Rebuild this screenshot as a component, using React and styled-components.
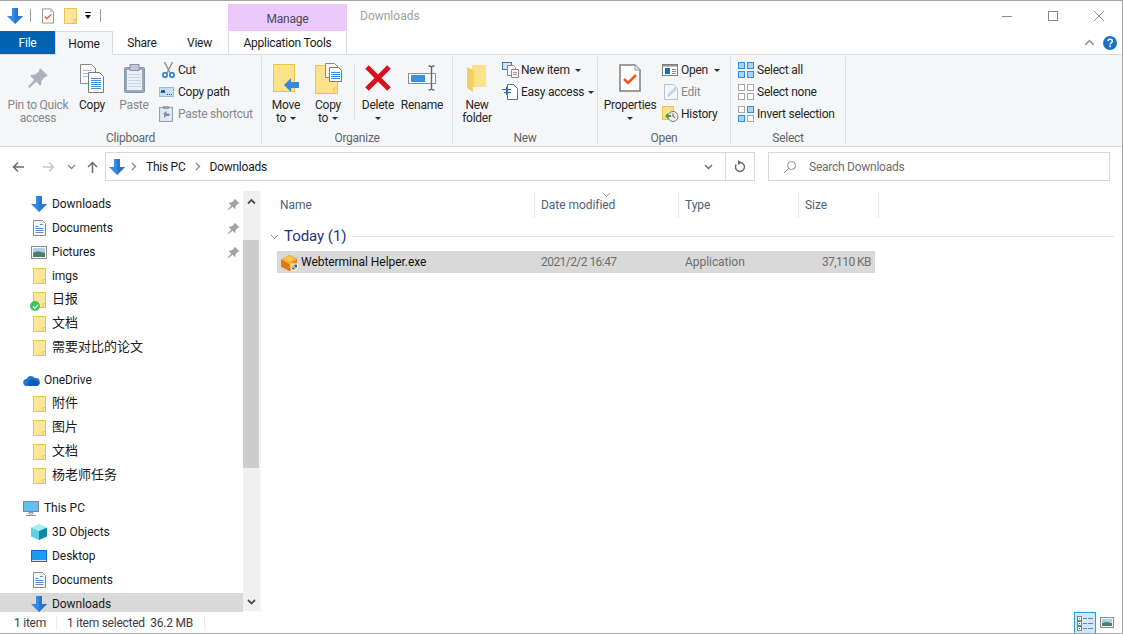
import React from 'react';
import styled, { createGlobalStyle } from 'styled-components';

const GlobalStyle = createGlobalStyle`
  html, body {
    margin: 0;
    padding: 0;
    background: #ffffff;
  }
  body {
    font-family: Roboto, "Noto Sans CJK SC", sans-serif;
    font-size: 12px;
    letter-spacing: -0.25px;
    color: #1a1a1a;
  }
  * {
    box-sizing: border-box;
  }
`;

const Window = styled.div`
  width: 1123px;
  height: 634px;
  display: flex;
  flex-direction: column;
  overflow: hidden;
  border-top: 1px solid #a6a6a6;
  border-right: 1px solid #a6a6a6;
  border-bottom: 1px solid #a6a6a6;
`;

const TitleBar = styled.div`
  height: 30px;
  display: flex;
`;

const QuickBar = styled.div`
  width: 228px;
  display: flex;
  align-items: center;
  padding: 0 0 0 7px;
  margin-top: -1px;
`;

const QuickSep = styled.div`
  width: 1px;
  height: 13px;
  background: #9a9a9a;
  margin: ${(p) => p.$margin};
`;

const QuickIcon = styled.div`
  display: flex;
  margin-right: ${(p) => p.$mr || 0}px;
`;

const ContextTab = styled.div`
  width: 119px;
  height: 27px;
  margin-top: 3px;
  background: #ebc9fb;
  color: #4a4a5a;
  display: flex;
  align-items: center;
  justify-content: center;
  padding-top: 2px;
`;

const WindowTitle = styled.div`
  margin: 8px 0 0 13px;
  color: #a0a0a0;
  letter-spacing: 0;
`;

const WindowButtons = styled.div`
  margin-left: auto;
  display: flex;
`;

const WindowButton = styled.div`
  width: 46px;
  height: 29px;
  display: flex;
  align-items: center;
  justify-content: center;
`;

const TabRow = styled.div`
  height: 24px;
  display: flex;
  border-bottom: 1px solid #dadbdc;
`;

const FileTab = styled.div`
  width: 55px;
  height: 23px;
  background: #0063b1;
  color: #ffffff;
  display: flex;
  align-items: center;
  justify-content: center;
`;

const Tab = styled.div`
  width: ${(p) => p.$w}px;
  height: ${(p) => (p.$active ? 24 : 23)}px;
  display: flex;
  align-items: center;
  justify-content: center;
  background: ${(p) => (p.$active ? '#f5f6f7' : 'transparent')};
  border: 1px solid ${(p) => (p.$active ? '#dadbdc' : 'transparent')};
  border-bottom: none;
`;

const ContextBody = styled(Tab)`
  border-left: 1px solid #dadbdc;
  border-right: 1px solid #dadbdc;
`;

const RibbonHelp = styled.div`
  margin-left: auto;
  display: flex;
  align-items: center;
  gap: 8px;
  padding-right: 5px;
`;

const Ribbon = styled.div`
  height: 92px;
  display: flex;
  background: #f5f6f7;
  border-bottom: 1px solid #dadbdc;
  padding: 2px 0;
`;

const Group = styled.div`
  width: ${(p) => p.$w}px;
  display: flex;
  flex-direction: column;
  border-right: 1px solid #dfe0e1;
`;

const GroupBody = styled.div`
  flex: 1;
  min-height: 0;
  display: flex;
`;

const GroupLabel = styled.div`
  height: 16px;
  text-align: center;
  color: #5c6670;
  padding-top: 3px;
`;

const BigButton = styled.div`
  width: ${(p) => p.$w}px;
  margin-left: ${(p) => p.$ml || 0}px;
  display: flex;
  flex-direction: column;
  align-items: center;
  color: ${(p) => (p.$off ? '#85888c' : '#262626')};
`;

const BigIcon = styled.div`
  height: 42px;
  flex-shrink: 0;
  display: flex;
  align-items: center;
  justify-content: center;
`;

const BigLabel = styled.div`
  line-height: 13px;
  text-align: center;
  white-space: nowrap;
`;

const Caret = styled.span`
  display: inline-block;
  width: 0;
  height: 0;
  margin-left: ${(p) => p.$ml ?? 4}px;
  vertical-align: 2px;
  border-left: 3px solid transparent;
  border-right: 3px solid transparent;
  border-top: 3px solid #333333;
`;

const VSep = styled.div`
  width: 1px;
  height: 55px;
  margin: 7px 0 0 ${(p) => p.$ml}px;
  background: #dfe0e1;
`;

const SmallColumn = styled.div`
  margin-left: ${(p) => p.$ml}px;
  padding-top: 2px;
  display: flex;
  flex-direction: column;
`;

const SmallButton = styled.div`
  height: 22px;
  display: flex;
  align-items: center;
  white-space: nowrap;
  color: ${(p) => (p.$off ? '#85888c' : '#262626')};
`;

const SmallIcon = styled.div`
  width: 19px;
  padding-left: ${(p) => p.$pl || 0}px;
  display: flex;
  align-items: center;
  flex-shrink: 0;
`;

const AddressRow = styled.div`
  height: 44px;
  display: flex;
  align-items: center;
  padding-bottom: 5px;
`;

const NavButtons = styled.div`
  width: 105px;
  display: flex;
  align-items: center;
  padding-left: 12px;
`;

const NavGap = styled.span`
  width: ${(p) => p.$w}px;
  flex-shrink: 0;
`;

const AddressBox = styled.div`
  width: 650px;
  height: 29px;
  display: flex;
  align-items: center;
  border: 1px solid #d9d9d9;
  padding-left: 3px;
`;

const Crumb = styled.span`
  margin: 0 ${(p) => p.$mr}px 0 8px;
  color: #1a1a1a;
`;

const AddressEnd = styled.div`
  margin-left: auto;
  display: flex;
  align-items: center;
  height: 100%;
`;

const AddressDrop = styled.div`
  width: 36px;
  height: 100%;
  display: flex;
  align-items: center;
  justify-content: center;
  padding-left: 7px;
  padding-right: 6px;
  border-right: 1px solid #d9d9d9;
`;

const AddressRefresh = styled.div`
  flex: 0 0 28px;
  display: flex;
  align-items: center;
  justify-content: center;
`;

const SearchBox = styled.div`
  width: 342px;
  height: 29px;
  margin-left: 13px;
  display: flex;
  align-items: center;
  gap: 12px;
  padding-left: 14px;
  border: 1px solid #d9d9d9;
  color: #6d6d6d;
`;

const Main = styled.div`
  flex: 1;
  min-height: 0;
  display: flex;
`;

const NavPane = styled.div`
  width: 243px;
  overflow: hidden;
  flex-shrink: 0;
  padding-top: 1px;
  letter-spacing: -0.05px;
`;

const NavRow = styled.div`
  height: 24px;
  display: flex;
  align-items: center;
  padding-left: ${(p) => (p.$top ? 23 : 31)}px;
  margin-top: ${(p) => (p.$gap ? 8 : 0)}px;
  background: linear-gradient(${(p) => (p.$selected ? '#ffffff 1px, #d9d9d9 1px' : 'transparent, transparent')});
`;

const NavIcon = styled.div`
  width: 21px;
  flex-shrink: 0;
  position: relative;
  display: flex;
  align-items: center;
  padding-left: ${(p) => (p.$narrow ? 2 : 0)}px;
`;

const SyncBadge = styled.div`
  position: absolute;
  left: -1px;
  bottom: -3px;
  width: 10px;
  height: 10px;
  border-radius: 50%;
  background: #3fc25a;
  display: flex;
  align-items: center;
  justify-content: center;
`;

const NavText = styled.span`
  font-size: ${(p) => (p.$cjk ? 13 : 12)}px;
  margin-bottom: ${(p) => (p.$cjk ? 6 : 0)}px;
  letter-spacing: ${(p) => (p.$cjk ? 0 : 'inherit')};
  white-space: nowrap;
`;

const PinSlot = styled.div`
  margin-left: auto;
  padding-right: 3px;
  display: flex;
`;

const ScrollBar = styled.div`
  width: 16px;
  flex-shrink: 0;
  background: #f0f0f0;
  display: flex;
  flex-direction: column;
  margin-bottom: 1px;
`;

const ScrollButton = styled.div`
  height: 20px;
  display: flex;
  align-items: center;
  justify-content: center;
`;

const ScrollThumb = styled.div`
  height: 228px;
  margin-top: 29px;
  background: #cdcdcd;
`;

const ScrollRest = styled.div`
  flex: 1;
`;

const FilePane = styled.div`
  flex: 1;
  border-left: 2px solid #f4f4f4;
  padding-left: 12px;
  min-width: 0;
  letter-spacing: -0.05px;
`;

const Header = styled.div`
  display: flex;
  height: 27px;
`;

const HeaderCell = styled.div`
  width: ${(p) => p.$w}px;
  padding-left: ${(p) => p.$pl || 6}px;
  display: flex;
  align-items: center;
  position: relative;
  color: #4c607a;
  border-right: 1px solid #e5e5e5;
  margin-top: 1px;
`;

const SortMark = styled.div`
  position: absolute;
  left: 67px;
  top: -2px;
  display: flex;
`;

const GroupHead = styled.div`
  height: 30px;
  display: flex;
  align-items: center;
  padding-top: 6px;
  margin-left: -3px;
  margin-right: 8px;
  color: #1e3287;
  font-size: 15px;
  gap: 5px;
`;

const GroupLine = styled.div`
  flex: 1;
  height: 1px;
  background: #e2e2e2;
  margin-left: 1px;
`;

const FileRow = styled.div`
  width: 598px;
  height: 22px;
  margin: 3px 0 0 4px;
  background: #d9d9d9;
  display: flex;
  align-items: center;
  color: #6d6d6d;
`;

const FileIcon = styled.div`
  width: 24px;
  padding-left: 4px;
  display: flex;
  flex-shrink: 0;
`;

const FileCell = styled.div`
  width: ${(p) => p.$w}px;
  text-align: ${(p) => (p.$right ? 'right' : 'left')};
  color: ${(p) => (p.$name ? '#101010' : '#6d6d6d')};
  letter-spacing: ${(p) => (p.$tight ? '-0.55px' : 'inherit')};
  flex-shrink: 0;
`;

const StatusBar = styled.div`
  height: 21px;
  display: flex;
  align-items: center;
  color: #3a3a4a;
`;

const StatusCell = styled.div`
  width: ${(p) => p.$w}px;
  padding-left: ${(p) => p.$pl}px;
  display: flex;
  height: 14px;
  align-items: center;
  border-right: 1px solid #ececec;
  white-space: nowrap;
`;

const ViewButtons = styled.div`
  margin-left: auto;
  display: flex;
  align-items: center;
  gap: 4px;
  padding-right: 8px;
`;

const ViewButton = styled.div`
  width: 22px;
  height: 22px;
  display: flex;
  align-items: center;
  justify-content: center;
  background: ${(p) => (p.$active ? '#cce8ff' : 'transparent')};
  border: 1px solid ${(p) => (p.$active ? '#26a0da' : 'transparent')};
`;

const DownArrow = () => (
  <svg width="16" height="16" viewBox="0 0 16 16">
    <path d="M5 0h6v8h5l-8 8-8-8h5z" fill="#3689e0" />
    <path d="M8 0h3v8h5l-8 8z" fill="#2a76cc" />
  </svg>
);

const Folder = () => (
  <svg width="13" height="16" viewBox="0 0 13 16">
    <rect x=".5" y=".5" width="12" height="15" fill="#fde59a" stroke="#e8c552" />
    <path d="M10 15.5v-4h2.5" fill="none" stroke="#e8c552" />
  </svg>
);

const DocCheck = ({ w = 12, h = 16 }) => (
  <svg width={w} height={h} viewBox="0 0 22 28">
    <path d="M1 1h15l5 5v21H1z" fill="#ffffff" stroke="#7f7f7f" strokeWidth="1.5" />
    <path d="M16 1v5h5" fill="#e5e5e5" stroke="#9a9a9a" />
    <path d="M5 15l4 4 8-8" fill="none" stroke="#f0591e" strokeWidth="2.5" />
  </svg>
);

const Pin = ({ size = 13, color = '#9aa2ab' }) => (
  <svg width={size} height={size} viewBox="0 0 20 20">
    <path d="M12 1l7 7-2 1-1 0-3 4 0 3-1 1-3.5-3.5L2 19l-1-1 5.5-6.5L3 8l1-1 3 0 4-3 0-1z" fill={color} />
  </svg>
);

const CopyIcon = () => (
  <svg width="25" height="29" viewBox="0 0 25 29">
    <path d="M.5.5h11l4 4v15H.5z" fill="#ffffff" stroke="#8a8a8a" />
    <path d="M3 6.5h9M3 9.5h9M3 12.5h5" stroke="#9ec4ea" />
    <path d="M8.5 8.5h11l4 4v16h-15z" fill="#ffffff" stroke="#7a7a7a" />
    <path d="M11 14.5h10M11 16.5h10M11 18.5h10M11 20.5h10M11 22.5h10M11 24.5h10" stroke="#3f8fe0" />
  </svg>
);

const PasteIcon = () => (
  <svg width="21" height="29" viewBox="0 0 21 29">
    <rect x=".5" y="3.5" width="20" height="25" rx="1" fill="#9aa8bc" stroke="#8595ab" />
    <rect x="3" y="6" width="15" height="20" fill="#eceff6" />
    <path d="M4 10.5h13M4 13.5h13M4 16.5h13M4 19.5h13M4 22.5h13" stroke="#cdd4e2" />
    <rect x="6" y=".5" width="9" height="6" fill="#c0c8d4" stroke="#8595ab" />
  </svg>
);

const CutIcon = () => (
  <svg width="13" height="16" viewBox="0 0 13 16">
    <path d="M2.5 0l5.500 11M10.500 0L5 11" stroke="#8d8d8d" strokeWidth="1.3" fill="none" />
    <circle cx="3" cy="13" r="2.2" fill="none" stroke="#1f78c8" strokeWidth="1.5" />
    <circle cx="10" cy="13" r="2.2" fill="none" stroke="#1f78c8" strokeWidth="1.5" />
  </svg>
);

const CopyPathIcon = () => (
  <svg width="15" height="10" viewBox="0 0 15 10">
    <rect x=".5" y=".5" width="14" height="9" fill="#bfe0f7" stroke="#9bbdd6" />
    <path d="M2 6l1-3 1 3 1-3 1 3" fill="none" stroke="#2a4a70" />
    <path d="M8 7.5h1M10 7.5h1M12 7.5h1" stroke="#2a4a70" />
  </svg>
);

const PasteShortcutIcon = () => (
  <svg width="14" height="16" viewBox="0 0 14 16">
    <rect x=".5" y="1.5" width="13" height="14" fill="#e4e9f1" stroke="#94a2b6" strokeWidth="1.2" />
    <rect x="4" y="0" width="6" height="3" fill="#94a2b6" />
    <path d="M5 12V8H3.5l4-3v2.5h3V10h-3" fill="#7d90a8" />
  </svg>
);

const MoveToIcon = () => (
  <svg width="27" height="29" viewBox="0 0 27 29">
    <rect x=".5" y=".5" width="21" height="27" fill="#fde28a" stroke="#e9c548" />
    <path d="M18 28v-5h3.5" fill="none" stroke="#e9c548" />
    <path d="M11 21l7-7v4h8v6h-8v4z" fill="#3689e0" />
  </svg>
);

const CopyToIcon = () => (
  <svg width="27" height="31" viewBox="0 0 27 31">
    <rect x=".5" y="2.5" width="22" height="28" fill="#fde28a" stroke="#e9c548" />
    <path d="M19 30v-5h3.5" fill="none" stroke="#e9c548" />
    <path d="M10.5.5h9l3 3v11h-12z" fill="#f7f7f7" stroke="#8a8a8a" />
    <path d="M14.5 4.5h9l3 3v11h-12z" fill="#ffffff" stroke="#7a7a7a" />
    <path d="M16 9.5h9M16 11.5h9M16 13.5h9M16 15.5h9" stroke="#3f8fe0" />
  </svg>
);

const DeleteIcon = () => (
  <svg width="26" height="26" viewBox="0 0 26 26">
    <path d="M2 2l22 22M24 2L2 24" stroke="#d9101c" strokeWidth="5" />
  </svg>
);

const RenameIcon = () => (
  <svg width="29" height="26" viewBox="0 0 29 26">
    <rect x=".5" y="8.5" width="27" height="10" fill="#ffffff" stroke="#8a9098" />
    <rect x="3" y="10" width="14" height="7" fill="#3792e4" />
    <path d="M20.5 1c2 0 2.5 0 3 1v22c-.5 1-1 1-3 1M26.5 1c-2 0-2.5 0-3 1M26.5 25c-2 0-2.5 0-3-1" fill="none" stroke="#5f6670" strokeWidth="1.4" />
  </svg>
);

const NewFolderIcon = () => (
  <svg width="20" height="28" viewBox="0 0 20 28">
    <path d="M5 1h14v22H5z" fill="#fde28a" />
    <path d="M0 3l6 3v22l-6-4z" fill="#f4cf66" />
    <path d="M6 6h2v17H6z" fill="#fbd976" />
  </svg>
);

const NewItemIcon = () => (
  <svg width="17" height="16" viewBox="0 0 17 16">
    <rect x=".5" y=".5" width="9" height="7" fill="#cfe4f6" stroke="#3f78a8" />
    <path d="M5.5 3.5h6l2 2v8h-8z" fill="#ffffff" stroke="#8a8a8a" />
    <path d="M9.5 7.5h7v8h-7z" fill="#fff4f4" stroke="#8a8a8a" />
    <path d="M11 10.5h4M11 12.5h4" stroke="#d88a8a" />
  </svg>
);

const EasyAccessIcon = () => (
  <svg width="16" height="16" viewBox="0 0 16 16">
    <path d="M5.5.5h6l4 4v11h-10z" fill="#ffffff" stroke="#6e6e6e" />
    <path d="M0 5.5h9M2 8.5h7M4.5 3v8" stroke="#2a6ca8" fill="none" />
  </svg>
);

const OpenIcon = () => (
  <svg width="16" height="12" viewBox="0 0 16 12">
    <rect x=".5" y=".5" width="15" height="11" fill="#ffffff" stroke="#7f7f7f" />
    <path d="M1 1h14v1.5H1z" fill="#8f8f8f" />
    <rect x="3" y="4" width="5" height="6" fill="#1868c4" />
    <path d="M10 5.5h4M10 7.5h4M10 9.5h4" stroke="#8a8a8a" />
  </svg>
);

const EditIcon = () => (
  <svg width="14" height="16" viewBox="0 0 14 16">
    <path d="M.5.5h9l4 4v11H.5z" fill="#f3f6fb" stroke="#b9c5d6" />
    <path d="M3 13l1-3 7-7 2 2-7 7z" fill="#c5d5ea" />
  </svg>
);

const HistoryIcon = () => (
  <svg width="17" height="16" viewBox="0 0 17 16">
    <rect x=".5" y=".5" width="11" height="13" fill="#fde28a" stroke="#e9c548" />
    <circle cx="11" cy="10.5" r="5" fill="#f2f2f2" stroke="#777777" />
    <path d="M11 7.5v3l2 1" fill="none" stroke="#555555" />
    <path d="M3 10l3-3v2h3v2H6v2z" fill="#36a838" />
  </svg>
);

const SelectIcon = ({ on }) => (
  <svg width="16" height="16" viewBox="0 0 16 16">
    {[[0, 0], [9, 0], [0, 9], [9, 9]].map(([x, y], i) => (
      <rect
        key={i}
        x={x + 0.5}
        y={y + 0.5}
        width="6"
        height="6"
        fill={on[i] ? '#a9d3f5' : '#ffffff'}
        stroke={on[i] ? '#2f8fe0' : '#a8a8a8'}
      />
    ))}
  </svg>
);

const Chevron = ({ dir = 'down', size = 9, color = '#707070', width = 1.4 }) => {
  const points = {
    down: '1,3 4.5,6.5 8,3',
    up: '1,6.5 4.5,3 8,6.5',
    right: '3,1 6.5,4.5 3,8',
  };
  return (
    <svg width={size} height={size} viewBox="0 0 9 9">
      <polyline points={points[dir]} fill="none" stroke={color} strokeWidth={width} />
    </svg>
  );
};

const NavArrow = ({ dir, color }) => (
  <svg width="13" height="12" viewBox="0 0 13 12">
    {dir === 'left' && <path d="M12 6H2M6 1.5L1.5 6 6 10.5" fill="none" stroke={color} strokeWidth="1.5" />}
    {dir === 'right' && <path d="M1 6h10M7 1.5L11.5 6 7 10.5" fill="none" stroke={color} strokeWidth="1.5" />}
    {dir === 'up' && <path d="M6.5 12V2M2 6l4.5-4.5L11 6" fill="none" stroke={color} strokeWidth="1.5" />}
  </svg>
);

const RefreshIcon = () => (
  <svg width="12" height="14" viewBox="0 0 12 14">
    <path d="M6 2.5a4.5 4.5 0 1 1-3.8 2" fill="none" stroke="#6a6a6a" strokeWidth="1.4" />
    <path d="M4 0l3.5 2.5L4 5z" fill="#6a6a6a" />
  </svg>
);

const SearchIcon = () => (
  <svg width="14" height="14" viewBox="0 0 14 14">
    <circle cx="8.5" cy="5.5" r="4" fill="none" stroke="#8a8a8a" />
    <path d="M5.5 8.5L1 13" stroke="#8a8a8a" />
  </svg>
);

const DocumentsIcon = () => (
  <svg width="13" height="16" viewBox="0 0 13 16">
    <path d="M.5.5h9l3 3v12H.5z" fill="#f6f6f6" stroke="#8a8a8a" />
    <path d="M2.5 6.5h3M2.5 8.5h8M2.5 10.5h8M2.5 12.5h8M7 4.5h3" stroke="#5b8fc4" />
  </svg>
);

const PicturesIcon = () => (
  <svg width="16" height="13" viewBox="0 0 16 13">
    <rect x=".5" y=".5" width="15" height="12" fill="#ffffff" stroke="#8d8d8d" />
    <rect x="2" y="2" width="12" height="5" fill="#a9d4e8" />
    <path d="M2 7c3-2 6-2 12 0v4H2z" fill="#4f7d68" />
  </svg>
);

const OneDriveIcon = () => (
  <svg width="17" height="11" viewBox="0 0 17 11">
    <path d="M4 11a3.5 3.5 0 0 1-.5-7A5 5 0 0 1 12 3a3.8 3.8 0 0 1 1.500 8z" fill="#1f78d0" />
    <path d="M6 11a3 3 0 0 1 1-5.500A4 4 0 0 1 13 5.500 2.800 2.800 0 0 1 14 11z" fill="#0f5cb0" />
  </svg>
);

const ThisPCIcon = () => (
  <svg width="16" height="15" viewBox="0 0 16 15">
    <rect x=".5" y=".5" width="15" height="10" fill="#63bdf6" stroke="#7c8a96" />
    <path d="M6 11.5h4v1.5H6zM3 14.5h10" stroke="#8f9aa4" fill="none" />
  </svg>
);

const CubeIcon = () => (
  <svg width="16" height="16" viewBox="0 0 16 16">
    <path d="M8 0l8 3.5L8 7 0 3.5z" fill="#a8ecf0" />
    <path d="M0 3.5L8 7v9l-8-3.5z" fill="#5fd0df" />
    <path d="M16 3.5L8 7v9l8-3.5z" fill="#1187a8" />
  </svg>
);

const DesktopIcon = () => (
  <svg width="16" height="12" viewBox="0 0 16 12">
    <rect width="16" height="12" fill="#0a6fd0" />
    <path d="M1 1h14v9H1z" fill="#1a9cf0" />
    <path d="M1 10h14v1H1z" fill="#cfe4f6" />
  </svg>
);

const ExeIcon = () => (
  <svg width="17" height="17" viewBox="0 0 17 17">
    <path d="M0 5.5L8.5 1 16 5v7.5L8.5 17 0 12.5z" fill="#e8861a" />
    <path d="M0 5.5L8.5 10v7L0 12.5z" fill="#dc7a18" />
    <path d="M0 5.5L8.5 1 16 5l-7.500 5z" fill="#f9b233" />
    <ellipse cx="8" cy="4.8" rx="4" ry="2.4" fill="#fcc64c" />
    <path d="M9.5 9.5H17v4c0 1.8-1.7 3-3.700 3.500-2-.5-3.800-1.700-3.800-3.500z" fill="#ffffff" />
    <path d="M13.3 10.5H16v3h-2.700zM10.500 13.500h2.800v2.400c-1.500-.4-2.800-1.100-2.800-2.400z" fill="#1c64c0" />
    <path d="M10.5 10.5h2.800v3h-2.800zM13.300 13.500H16c0 1.100-1.200 2-2.700 2.400z" fill="#f2c230" />
  </svg>
);

const DetailsIcon = () => (
  <svg width="16" height="16" viewBox="0 0 16 16">
    <g stroke="#7f7f7f" fill="#ffffff">
      <rect x=".5" y="1.5" width="4" height="4" />
      <rect x=".5" y="6.5" width="4" height="4" />
      <rect x=".5" y="11.5" width="4" height="4" />
    </g>
    <rect x="2" y="3" width="1" height="1" fill="#8a8a8a" />
    <rect x="2" y="8" width="1" height="1" fill="#2a78c8" />
    <rect x="2" y="13" width="1" height="1" fill="#c83030" />
    <path d="M6 3.5h4M11 3.5h5M6 8.5h4M11 8.5h5M6 13.5h4M11 13.5h5" stroke="#7f7f7f" />
  </svg>
);

const LargeThumbIcon = () => (
  <svg width="14" height="11" viewBox="0 0 14 11">
    <rect x=".5" y=".5" width="13" height="10" fill="#ffffff" stroke="#8d8d8d" strokeWidth="1.2" />
    <rect x="2" y="2" width="10" height="3.5" fill="#a9d4e8" />
    <path d="M2 6c3-1.5 6-1 10 0v3H2z" fill="#4f7d68" />
  </svg>
);

const pinned = [
  { label: 'Downloads', icon: <DownArrow />, pin: true },
  { label: 'Documents', icon: <DocumentsIcon />, pin: true, narrow: true },
  { label: 'Pictures', icon: <PicturesIcon />, pin: true },
  { label: 'imgs', icon: <Folder />, narrow: true },
  { label: '日报', icon: <Folder />, narrow: true, cjk: true, synced: true },
  { label: '文档', icon: <Folder />, narrow: true, cjk: true },
  { label: '需要对比的论文', icon: <Folder />, narrow: true, cjk: true },
];

const oneDrive = ['附件', '图片', '文档', '杨老师任务'];

const computer = [
  { label: '3D Objects', icon: <CubeIcon /> },
  { label: 'Desktop', icon: <DesktopIcon /> },
  { label: 'Documents', icon: <DocumentsIcon />, narrow: true },
  { label: 'Downloads', icon: <DownArrow />, selected: true },
];

const NavItem = ({ item }) => (
  <NavRow $selected={item.selected}>
    <NavIcon $narrow={item.narrow}>
      {item.icon}
      {item.synced && (
        <SyncBadge>
          <svg width="7" height="7" viewBox="0 0 7 7">
            <path d="M1 3.5l1.8 1.8L6 2" fill="none" stroke="#ffffff" strokeWidth="1.2" />
          </svg>
        </SyncBadge>
      )}
    </NavIcon>
    <NavText $cjk={item.cjk}>{item.label}</NavText>
    {item.pin && (
      <PinSlot>
        <Pin />
      </PinSlot>
    )}
  </NavRow>
);

const App = () => {
  return (
    <Window>
      <GlobalStyle />
      <TitleBar>
        <QuickBar>
          <DownArrow />
          <QuickSep $margin="0 11px 0 7px" />
          <QuickIcon $mr={10}><DocCheck /></QuickIcon>
          <QuickIcon $mr={8}><Folder /></QuickIcon>
          <svg width="6" height="7" viewBox="0 0 6 7">
            <path d="M0 0h6v1H0zM0 3h6L3 7z" fill="#111111" />
          </svg>
          <QuickSep $margin="0 0 0 9px" />
        </QuickBar>
        <ContextTab>Manage</ContextTab>
        <WindowTitle>Downloads</WindowTitle>
        <WindowButtons>
          <WindowButton>
            <svg width="10" height="10" viewBox="0 0 10 10"><path d="M0 5.5h10" stroke="#8a8a8a" /></svg>
          </WindowButton>
          <WindowButton>
            <svg width="10" height="10" viewBox="0 0 10 10"><rect x=".5" y=".5" width="9" height="9" fill="none" stroke="#8a8a8a" /></svg>
          </WindowButton>
          <WindowButton>
            <svg width="10" height="10" viewBox="0 0 10 10"><path d="M0 0l10 10M10 0L0 10" stroke="#8a8a8a" /></svg>
          </WindowButton>
        </WindowButtons>
      </TitleBar>

      <TabRow>
        <FileTab>File</FileTab>
        <Tab $w={58} $active>Home</Tab>
        <Tab $w={58}>Share</Tab>
        <Tab $w={57}>View</Tab>
        <ContextBody $w={119}>Application Tools</ContextBody>
        <RibbonHelp>
          <Chevron dir="up" size={11} color="#9a9a9a" />
          <svg width="14" height="14" viewBox="0 0 14 14">
            <circle cx="7" cy="7" r="7" fill="#1a72c8" />
            <path d="M4.8 5.2C5 3.8 6 3.2 7.2 3.2c1.3 0 2.2.8 2.2 1.9 0 1.8-2.3 1.7-2.3 3.5" fill="none" stroke="#ffffff" strokeWidth="1.5" />
            <rect x="6.3" y="9.5" width="1.6" height="1.6" fill="#ffffff" />
          </svg>
        </RibbonHelp>
      </TabRow>

      <Ribbon>
        <Group $w={262}>
          <GroupBody>
            <BigButton $w={76} $off>
              <BigIcon><Pin size={22} color="#aab2bd" /></BigIcon>
              <BigLabel>Pin to Quick<br />access</BigLabel>
            </BigButton>
            <BigButton $w={32}>
              <BigIcon><CopyIcon /></BigIcon>
              <BigLabel>Copy</BigLabel>
            </BigButton>
            <BigButton $w={48} $ml={2} $off>
              <BigIcon><PasteIcon /></BigIcon>
              <BigLabel>Paste</BigLabel>
            </BigButton>
            <SmallColumn $ml={1}>
              <SmallButton>
                <SmallIcon $pl={3}><CutIcon /></SmallIcon>Cut
              </SmallButton>
              <SmallButton>
                <SmallIcon><CopyPathIcon /></SmallIcon>Copy path
              </SmallButton>
              <SmallButton $off>
                <SmallIcon><PasteShortcutIcon /></SmallIcon>Paste shortcut
              </SmallButton>
            </SmallColumn>
          </GroupBody>
          <GroupLabel>Clipboard</GroupLabel>
        </Group>

        <Group $w={191}>
          <GroupBody>
            <BigButton $w={44} $ml={2}>
              <BigIcon><MoveToIcon /></BigIcon>
              <BigLabel>Move<br />to <Caret $ml={1} /></BigLabel>
            </BigButton>
            <BigButton $w={40}>
              <BigIcon><CopyToIcon /></BigIcon>
              <BigLabel>Copy<br />to <Caret $ml={1} /></BigLabel>
            </BigButton>
            <VSep $ml={6} />
            <BigButton $w={44} $ml={1}>
              <BigIcon><DeleteIcon /></BigIcon>
              <BigLabel>Delete<br /><Caret $ml={0} /></BigLabel>
            </BigButton>
            <BigButton $w={44}>
              <BigIcon><RenameIcon /></BigIcon>
              <BigLabel>Rename</BigLabel>
            </BigButton>
          </GroupBody>
          <GroupLabel>Organize</GroupLabel>
        </Group>

        <Group $w={145}>
          <GroupBody>
            <BigButton $w={48}>
              <BigIcon><NewFolderIcon /></BigIcon>
              <BigLabel>New<br />folder</BigLabel>
            </BigButton>
            <SmallColumn $ml={1}>
              <SmallButton>
                <SmallIcon><NewItemIcon /></SmallIcon>New item<Caret $ml={5} />
              </SmallButton>
              <SmallButton>
                <SmallIcon><EasyAccessIcon /></SmallIcon>Easy access<Caret $ml={4} />
              </SmallButton>
            </SmallColumn>
          </GroupBody>
          <GroupLabel>New</GroupLabel>
        </Group>

        <Group $w={133}>
          <GroupBody>
            <BigButton $w={64}>
              <BigIcon><DocCheck w={22} h={28} /></BigIcon>
              <BigLabel>Properties<br /><Caret $ml={0} /></BigLabel>
            </BigButton>
            <SmallColumn $ml={0}>
              <SmallButton>
                <SmallIcon><OpenIcon /></SmallIcon>Open<Caret $ml={6} />
              </SmallButton>
              <SmallButton $off>
                <SmallIcon $pl={2}><EditIcon /></SmallIcon>Edit
              </SmallButton>
              <SmallButton>
                <SmallIcon><HistoryIcon /></SmallIcon>History
              </SmallButton>
            </SmallColumn>
          </GroupBody>
          <GroupLabel>Open</GroupLabel>
        </Group>

        <Group $w={115}>
          <GroupBody>
            <SmallColumn $ml={7}>
              <SmallButton>
                <SmallIcon><SelectIcon on={[1, 1, 1, 1]} /></SmallIcon>Select all
              </SmallButton>
              <SmallButton>
                <SmallIcon><SelectIcon on={[0, 0, 0, 0]} /></SmallIcon>Select none
              </SmallButton>
              <SmallButton>
                <SmallIcon><SelectIcon on={[0, 1, 1, 0]} /></SmallIcon>Invert selection
              </SmallButton>
            </SmallColumn>
          </GroupBody>
          <GroupLabel>Select</GroupLabel>
        </Group>
      </Ribbon>

      <AddressRow>
        <NavButtons>
          <NavArrow dir="left" color="#6a6a6a" />
          <NavGap $w={17} />
          <NavArrow dir="right" color="#c8c8c8" />
          <NavGap $w={12} />
          <Chevron size={9} color="#8a8a8a" />
          <NavGap $w={10} />
          <NavArrow dir="up" color="#6a6a6a" />
        </NavButtons>
        <AddressBox>
          <DownArrow />
          <NavGap $w={4} />
          <Chevron dir="right" color="#8a8a8a" />
          <Crumb $mr={7}>This PC</Crumb>
          <Chevron dir="right" color="#8a8a8a" />
          <Crumb $mr={0}>Downloads</Crumb>
          <AddressEnd>
            <AddressDrop><Chevron color="#6a6a6a" /></AddressDrop>
            <AddressRefresh><RefreshIcon /></AddressRefresh>
          </AddressEnd>
        </AddressBox>
        <SearchBox>
          <SearchIcon />
          Search Downloads
        </SearchBox>
      </AddressRow>

      <Main>
        <NavPane>
          {pinned.map((item, i) => (
            <NavItem key={i} item={item} />
          ))}
          <NavRow $top $gap>
            <NavIcon><OneDriveIcon /></NavIcon>
            <NavText>OneDrive</NavText>
          </NavRow>
          {oneDrive.map((label) => (
            <NavItem key={label} item={{ label, icon: <Folder />, narrow: true, cjk: true }} />
          ))}
          <NavRow $top $gap>
            <NavIcon><ThisPCIcon /></NavIcon>
            <NavText>This PC</NavText>
          </NavRow>
          {computer.map((item, i) => (
            <NavItem key={i} item={item} />
          ))}
        </NavPane>

        <ScrollBar>
          <ScrollButton><Chevron dir="up" color="#505050" width={1.8} /></ScrollButton>
          <ScrollThumb />
          <ScrollRest />
          <ScrollButton><Chevron color="#505050" width={1.8} /></ScrollButton>
        </ScrollBar>

        <FilePane>
          <Header>
            <HeaderCell $w={262} $pl={7}>Name</HeaderCell>
            <HeaderCell $w={144}>
              <SortMark><Chevron size={9} color="#a0a0a0" width={1} /></SortMark>
              Date modified
            </HeaderCell>
            <HeaderCell $w={120}>Type</HeaderCell>
            <HeaderCell $w={80}>Size</HeaderCell>
          </Header>

          <GroupHead>
            <Chevron size={9} color="#8a8a8a" width={1} />
            Today (1)
            <GroupLine />
          </GroupHead>

          <FileRow>
            <FileIcon><ExeIcon /></FileIcon>
            <FileCell $w={240} $name>Webterminal Helper.exe</FileCell>
            <FileCell $w={144} $tight>2021/2/2 16:47</FileCell>
            <FileCell $w={80}>Application</FileCell>
            <FileCell $w={106} $right $tight>37,110 KB</FileCell>
          </FileRow>
        </FilePane>
      </Main>

      <StatusBar>
        <StatusCell $w={57} $pl={14}>1 item</StatusCell>
        <StatusCell $w={148} $pl={10}>1 item selected&nbsp;&nbsp;36.2 MB</StatusCell>
        <ViewButtons>
          <ViewButton $active><DetailsIcon /></ViewButton>
          <LargeThumbIcon />
        </ViewButtons>
      </StatusBar>
    </Window>
  );
};

export default App;
